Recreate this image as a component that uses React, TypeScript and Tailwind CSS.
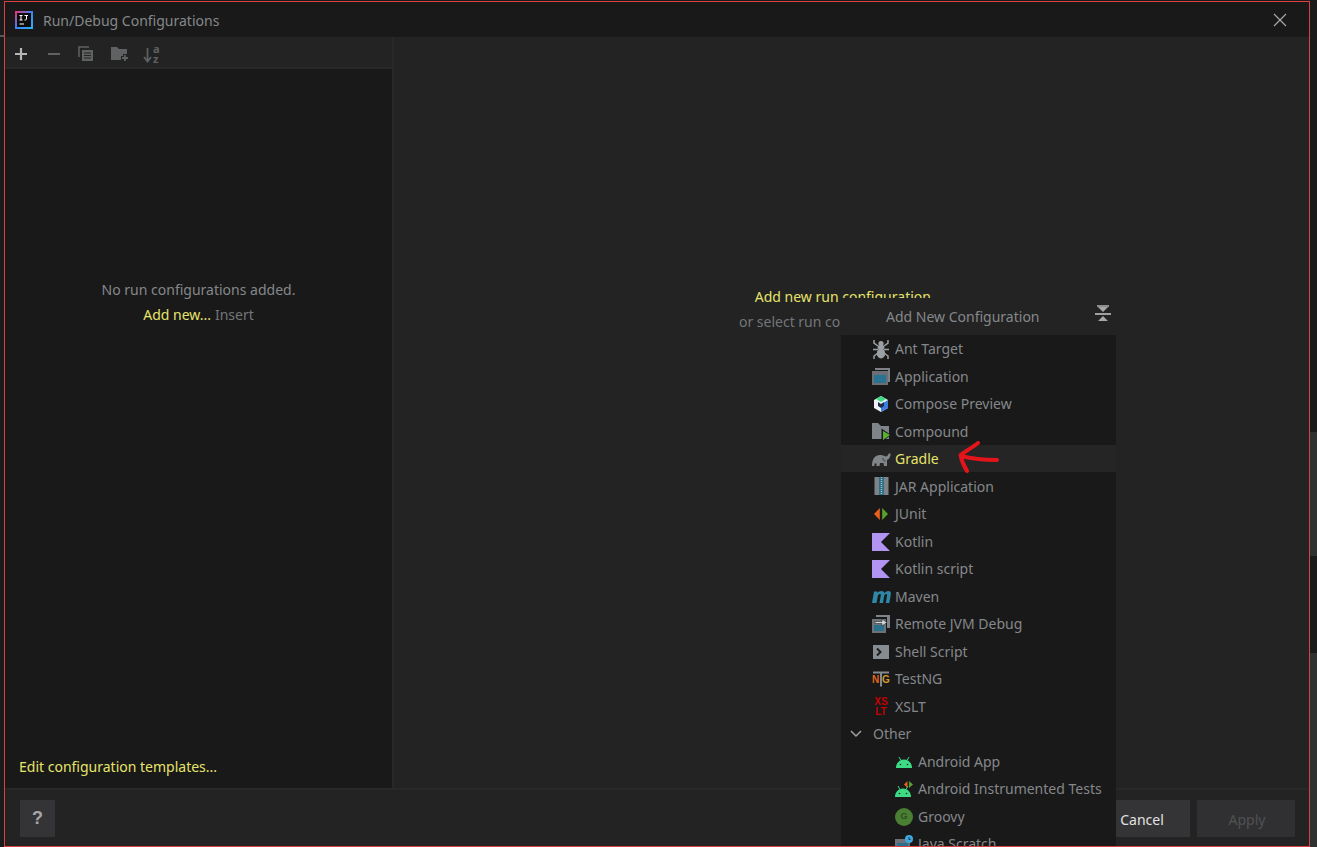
import React from "react";

const F = "font-['Noto_Sans','Open_Sans',sans-serif]";

function Ant() { return <svg width="18" height="19" viewBox="0 0 18 19" fill="#9aa0a4" stroke="#9aa0a4"><circle cx="9" cy="3.500" r="2.600" stroke="none"/><ellipse cx="9" cy="7.500" rx="3.400" ry="2.400" stroke="none"/><ellipse cx="9" cy="13.500" rx="4.200" ry="5" stroke="none"/><path d="M6 6 2 3V0M12 6l4-3V0M6 9.500H1M12 9.500h5M6 13l-4 3v3M12 13l4 3v3" fill="none" strokeWidth="1.500"/></svg>; }
function AppIcon() { return <svg width="18" height="18" viewBox="0 0 18 18"><path d="M3 0h15v14h-2V2H3z" fill="#7c8287"/><rect x="0" y="3" width="16" height="14" fill="#6a7075"/><rect x="2" y="7" width="12" height="8" fill="#2a7390"/></svg>; }
function Compose() { return <svg width="16" height="18" viewBox="0 0 16 18"><path d="M8 1 15 5v8l-7 4-7-4V5z" fill="#eef2f4"/><path d="M8 1 13 4 8 7 3 4z" fill="#3ddc84"/><path d="M10 8l5-3v8l-7 4v-5z" fill="#3b7de0"/><path d="M5 7l3 2 3-2v4l-3 2-3-2z" fill="#1d2a4a"/></svg>; }
function Compound() { return <svg width="20" height="20" viewBox="0 0 20 20" className="shrink-0"><path d="M1 1h6l3 3h8v13H1z" fill="#7e8489"/><path d="M10.500 6.500l9.500 6.500-9.500 7z" fill="#191919"/><path d="M12 9v9l7-5z" fill="#57b02f"/></svg>; }
function GradleIcon() { return <svg width="19" height="14" viewBox="0 0 19 14"><path d="M0 14C0 8 2 3 8 3c2 0 4 .5 5.500 1.500 1.500 0 2.500-1 3-2.500.5-1.200 2.100-1 2.100 0 0 2-1.100 5-3.600 6v6h-3l-.5-3H8l-.5 3h-3v-2.500h-2V14z" fill="#7f8589"/><path d="M11 6c0 2 1 3 2.500 3" stroke="#191919" strokeWidth=".7" fill="none"/></svg>; }
function Jar() { return <svg width="15" height="19" viewBox="0 0 15 19"><rect x="0.500" y="0" width="14" height="18" fill="#7d8387"/><rect x="5" y="0" width="5" height="18" fill="#2f6f86"/><path d="M7.500 0v18" stroke="#9fc9d8" strokeWidth="1.400" strokeDasharray="1 1"/></svg>; }
function JUnit() { return <svg width="16" height="14" viewBox="0 0 16 14"><path d="M6.800 1v12L1 7z" fill="#e8601c"/><path d="M9.200 1v12L15 7z" fill="#5aa02c"/></svg>; }
function Kotlin() { return <svg width="18" height="18" viewBox="0 0 18 18"><path d="M0 0h18L9 9l9 9H0z" fill="#b294f2"/></svg>; }
function Maven() { return <svg width="20" height="14" viewBox="0 0 20 14"><path d="M1 13 3 1.500h3.500l-.2 1.300C7.500 1.800 9 1 10.500 1c1.500 0 2.500.8 2.900 2C14.700 1.800 16 1 17.500 1c1.800 0 2.700 1.500 2.300 3.500L18.300 13h-3.500l1.300-7.500c.2-1-.1-1.500-.8-1.500-.7 0-1.800.7-2.100 1.500L12 13H8.500l1.300-7.500c.2-1-.1-1.500-.8-1.500-.7 0-1.800.7-2.100 1.500L5.500 13z" fill="#2f87a8"/></svg>; }
function Remote() { return <svg width="18" height="18" viewBox="0 0 18 18"><path d="M4 0h14v13h-3V2H4z" fill="#7e8489"/><rect x="0" y="4" width="14" height="14" fill="#6c7277"/><rect x="2" y="10" width="10" height="6" fill="#29708c"/><path d="M3 6.500h7V4l5 3.500-5 3.500V8.500H3z" fill="#d0d4d6" stroke="#191919" strokeWidth=".5"/></svg>; }
function Shell() { return <svg width="16" height="14" viewBox="0 0 16 14"><rect width="16" height="14" fill="#868c90"/><path d="M4 3.500 7.500 7 4 10.500" stroke="#1d1d1d" strokeWidth="2" fill="none"/></svg>; }
function TestNG() { return <div className="relative w-[18px] h-[16px]"><svg width="18" height="16" viewBox="0 0 18 16" className="absolute left-0 top-0"><path d="M1 .5h16v2h-7v13H8V2.500H1z" fill="#83898d"/></svg><div className="absolute left-0 top-[3px] text-[10px] leading-[11px] font-black text-[#e0641c] font-['Liberation_Sans',sans-serif]">N</div><div className="absolute left-[10px] top-[3px] text-[10px] leading-[11px] font-black text-[#d49a30] font-['Liberation_Sans',sans-serif]">G</div></div>; }
function Xslt() { return <div className="w-[16px] text-center text-[#c40000] text-[10px] leading-[10px] font-black font-['Liberation_Sans',sans-serif]"><div>XS</div><div>LT</div></div>; }
function Droid() { return <svg width="16" height="12" viewBox="0 0 16 12"><path d="M0 12C0 7 3.500 3.500 8 3.500s8 3.500 8 8.500z" fill="#3ddc84"/><path d="M3 1l2 3.500M13 1l-2 3.500" stroke="#3ddc84" strokeWidth="1"/><circle cx="4.500" cy="8.500" r=".8" fill="#1a1a1a"/><circle cx="11.500" cy="8.500" r=".8" fill="#1a1a1a"/></svg>; }
function DroidTest() { return <div className="relative w-[18px] h-[16px]"><div className="absolute left-0 bottom-0"><Droid /></div><svg width="9" height="7" viewBox="0 0 9 7" className="absolute left-[9px] top-0"><path d="M3.500 0v7L0 3.500z" fill="#e8601c"/><path d="M5 0v7l4-3.500z" fill="#5aa02c"/></svg></div>; }
function Groovy() { return <div className="w-[18px] h-[18px] rounded-full bg-[#4a7f33] flex items-center justify-center text-[9px] font-bold text-[#2d4f1e] font-['Liberation_Sans',sans-serif]">G</div>; }
function JavaScratch() { return <svg width="19" height="18" viewBox="0 0 19 18"><rect x="0" y="4" width="15" height="14" fill="#6c7277"/><rect x="2" y="8" width="11" height="8" fill="#29708c"/><circle cx="14" cy="4" r="4" fill="#3fa7e0"/><path d="M14 2v2.500h1.500" stroke="#173348" fill="none"/></svg>; }

function Row({ icon, label, hl, sub }: { icon: React.ReactNode; label: string; hl?: boolean; sub?: boolean }) {
  return (
    <div className={`flex items-center shrink-0 h-[27.500px] pt-[2px] ${sub ? "pl-[53px] gap-[4px]" : "pl-[30px] gap-[4px]"} ${hl ? "bg-[#252525] text-[#e6e36a]" : "text-[#85888b]"}`}>
      <span className="w-[20px] h-[20px] flex items-center justify-center shrink-0">{icon}</span>
      <span className="text-[14px] leading-[20px] whitespace-nowrap">{label}</span>
    </div>
  );
}

const items: [React.ReactNode, string, boolean?][] = [
  [<Ant />, "Ant Target"],
  [<AppIcon />, "Application"],
  [<Compose />, "Compose Preview"],
  [<Compound />, "Compound"],
  [<GradleIcon />, "Gradle", true],
  [<Jar />, "JAR Application"],
  [<JUnit />, "JUnit"],
  [<Kotlin />, "Kotlin"],
  [<Kotlin />, "Kotlin script"],
  [<Maven />, "Maven"],
  [<Remote />, "Remote JVM Debug"],
  [<Shell />, "Shell Script"],
  [<TestNG />, "TestNG"],
  [<Xslt />, "XSLT"],
];

export default function App() {
  return (
    <div className={`relative w-[1317px] h-[847px] overflow-hidden bg-[#1b1b1b] pl-[4px] pr-[7px] pt-[1px] ${F}`}>
      <div className="absolute right-0 top-[432px] w-[7px] h-[124px] bg-[#2f3230]" />
      <div className="absolute right-0 top-[653px] w-[7px] h-[194px] bg-[#2f3230]" />
      <div className="absolute left-0 top-[35px] w-[4px] h-[2px] bg-[#55585a]" />
      <div className="relative w-full h-[846px] border border-[#d9403f] bg-[#232323] flex flex-col overflow-hidden">
        {/* title */}
        <div className="h-[35px] shrink-0 bg-[#191919] flex items-center pt-[1px] pl-[10px] pr-[22px]">
          <svg width="18" height="18" viewBox="0 0 18 18" className="shrink-0">
            <defs><linearGradient id="ij" x1="0" y1="0" x2="1" y2="1"><stop offset="0" stopColor="#ef2f6a"/><stop offset="0.5" stopColor="#3b82f6"/><stop offset="1" stopColor="#29b6f6"/></linearGradient></defs>
            <rect width="18" height="18" fill="url(#ij)"/>
            <rect x="2" y="2" width="14" height="14" fill="#0c0c0c"/>
            <path d="M4.500 4.500h3M6 4.500v4.500M4.500 9h3M9.500 4.500h3.500M11.500 4.500v3.500c0 .6-.5 1-1 1H9.500M4.500 13h4.500" stroke="#fff" strokeWidth="1" fill="none"/>
          </svg>
          <span className="ml-[10px] text-[14px] text-[#85888b] whitespace-nowrap">Run/Debug Configurations</span>
          <svg width="14" height="14" viewBox="0 0 14 14" className="ml-auto" fill="none" stroke="#a5a7a9" strokeWidth="1.200"><path d="M1 1l12 12M13 1 1 13"/></svg>
        </div>
        {/* body */}
        <div className="flex-1 flex min-h-0">
          <div className="w-[389px] shrink-0 flex flex-col border-r-2 border-[#282828] bg-[#191919]">
            <div className="h-[32px] shrink-0 bg-[#232323] border-b-2 border-[#282828] flex items-center pl-[8px] pt-[3px]">
              <svg width="16" height="16" viewBox="0 0 16 16"><path d="M8 2v12M2 8h12" stroke="#b4b6b8" strokeWidth="2.200"/></svg>
              <svg width="16" height="16" viewBox="0 0 16 16" className="ml-[17px]"><path d="M2 8h12" stroke="#5f6163" strokeWidth="2"/></svg>
              <svg width="16" height="16" viewBox="0 0 16 16" className="ml-[16px]" fill="none" stroke="#5f6163" strokeWidth="1.500"><path d="M1 11V1h10"/><rect x="4" y="4" width="11" height="11" fill="#5f6163" stroke="none"/><path d="M6 7h7M6 9.500h7M6 12h7" stroke="#232323" strokeWidth="1"/></svg>
              <svg width="18" height="16" viewBox="0 0 18 16" className="ml-[17px]"><path d="M0 1h6l2 2h8v11H0z" fill="#5f6163"/><path d="M14 8v8M10 12h8" stroke="#232323" strokeWidth="4"/><path d="M14 9v6M11 12h6" stroke="#5f6163" strokeWidth="1.800"/></svg>
              <span className="relative w-[18px] h-[20px] ml-[14px]">
                <svg width="9" height="16" viewBox="0 0 9 16" className="absolute left-0 top-[3px]"><path d="M4.500 1v13M1 10l3.500 4.500L8 10" stroke="#5f6163" strokeWidth="1.700" fill="none"/></svg>
                <span className="absolute left-[10px] top-0 text-[11px] leading-[9px] font-bold text-[#5f6163]">a</span>
                <span className="absolute left-[10px] top-[10px] text-[11px] leading-[9px] font-bold text-[#5f6163]">z</span>
              </span>
            </div>
            <div className="flex-1 flex flex-col items-center pt-[211px]">
              <div className="text-[14px] leading-[20px] text-[#85888b]">No run configurations added.</div>
              <div className="mt-[5px] text-[14px] leading-[20px]"><span className="text-[#e6e36a]">Add new...</span><span className="text-[#73767a] ml-[4px]">Insert</span></div>
            </div>
            <div className="h-[32px] shrink-0 pl-[14px] pt-[1px] text-[14px] leading-[20px] text-[#e6e36a]">Edit configuration templates...</div>
          </div>
          <div className="flex-1 flex flex-col items-center pt-[250px] pr-[6px]">
            <div className="text-[14px] leading-[20px] text-[#e6e36a]">Add new run configuration...</div>
            <div className="mt-[5px] mr-[12px] text-[14px] leading-[20px] text-[#73767a]">or select run configuration type</div>
          </div>
        </div>
        {/* footer */}
        <div className="h-[58px] shrink-0 border-t-2 border-[#282828] flex items-start pt-[10px] pl-[15px] pr-[14px]">
          <div className="w-[35px] h-[37px] bg-[#343436] flex items-center justify-center text-[#a5a7a9] text-[18px] font-bold font-['Liberation_Sans',sans-serif]">?</div>
          <div className="ml-auto flex gap-[7px]">
            <div className="w-[98px] h-[37px] pt-[2px] pl-[2px] bg-[#343436] flex items-center justify-center text-[14px] text-[#e2e2e2]">Cancel</div>
            <div className="w-[98px] h-[37px] pt-[2px] pl-[2px] bg-[#303032] flex items-center justify-center text-[14px] text-[#505254]">Apply</div>
          </div>
        </div>
        {/* popup */}
        <div className="absolute left-[836px] top-[296px] w-[275px] h-[560px] bg-[#191919] flex flex-col overflow-hidden">
          <div className="h-[36.500px] shrink-0 bg-[#232323] flex items-center relative">
            <span className="ml-[45px] text-[14px] text-[#85888b]">Add New Configuration</span>
            <svg width="16" height="18" viewBox="0 0 16 18" className="absolute right-[5px] top-[7px]"><path d="M3 2h10L8 7zM3 16h10L8 11z" fill="#a5a7a9"/><path d="M0 9h16" stroke="#d5d6d7" strokeWidth="1.400"/><path d="M2 1h12" stroke="#d5d6d7" strokeWidth="1.200"/></svg>
          </div>
          {items.map(([ic, l, hl]) => <Row key={l} icon={ic} label={l} hl={hl} />)}
          <div className="flex items-center shrink-0 h-[27.500px] pt-[2px] text-[#85888b]">
            <svg width="12" height="8" viewBox="0 0 12 8" className="ml-[9px]" fill="none" stroke="#a5a7a9" strokeWidth="1.400"><path d="M1 1l5 5 5-5"/></svg>
            <span className="ml-[11px] text-[14px] leading-[20px]">Other</span>
          </div>
          <Row sub icon={<Droid />} label="Android App" />
          <Row sub icon={<DroidTest />} label="Android Instrumented Tests" />
          <Row sub icon={<Groovy />} label="Groovy" />
          <Row sub icon={<JavaScratch />} label="Java Scratch" />
          <svg width="44" height="34" viewBox="0 0 44 34" className="absolute left-[117px] top-[143px]" fill="none" stroke="#e3151a" strokeWidth="4" strokeLinecap="round" strokeLinejoin="round"><path d="M20 2C15 6 8 10 2.500 14c1 5 3.500 11 6.500 16M3 15c8 2 20 4 36 4"/></svg>
        </div>
      </div>
    </div>
  );
}
